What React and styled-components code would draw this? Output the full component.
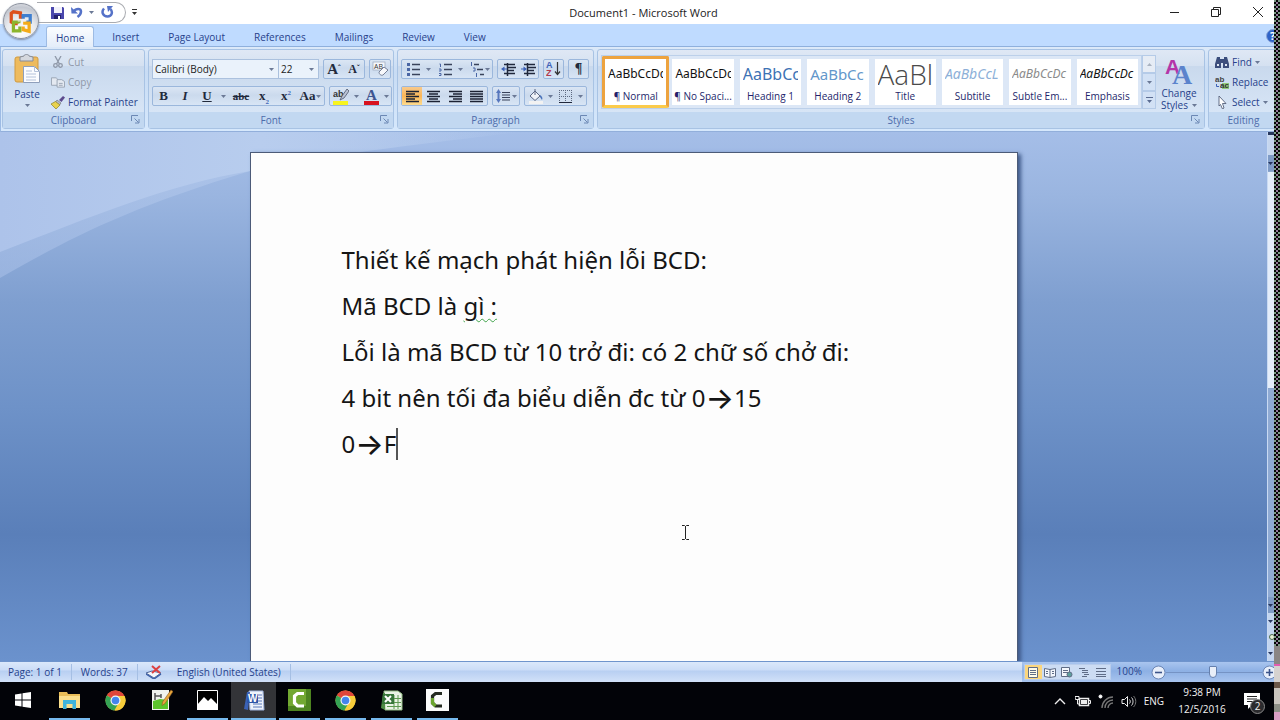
import styled, { createGlobalStyle, css } from "styled-components";

const GlobalStyle = createGlobalStyle`
  * {
    box-sizing: border-box;
  }
  body {
    margin: 0;
    overflow: hidden;
    background: #000;
    font-family: "Open Sans", "Noto Sans", sans-serif;
    font-size: 10px;
    line-height: 14px;
    color: #27418b;
  }
  button, select, input {
    font: inherit;
    color: inherit;
    margin: 0;
    padding: 0;
    border: 0;
    background: none;
  }
  svg {
    display: block;
    flex: none;
  }
`;

const Screen = styled.div`
  display: flex;
  height: 100vh;
`;
const Desktop = styled.div`
  flex: 1;
  min-width: 0;
  display: flex;
  flex-direction: column;
  overflow: hidden;
`;

// edge of the second monitor
const Edge = styled.div`
  width: 6px;
  display: flex;
  flex-direction: column;
`;
const EdgeDots = styled.div`
  flex: 1;
  background-color: #050505;
  background-image: radial-gradient(circle at 1px 1px, #7d9a86 0 1px, transparent 1px),
    radial-gradient(circle at 3px 3px, #94789c 0 1px, transparent 1px);
  background-size: 4px 4px;
`;
const EdgePhoto = styled.div`
  height: 74px;
  background: linear-gradient(
    #8a8684 0 18px,
    #e25bb0 18px 20px,
    #d6d2cf 20px 36px,
    #6b5748 36px 42px,
    #c9c4bd 42px 58px,
    #8d8f86 58px 66px,
    #d99fc4 66px
  );
`;

/* ---------- title bar ---------- */

const TitleBar = styled.header`
  position: relative;
  height: 24px;
  flex: none;
  display: flex;
  align-items: center;
  background: #fff;
  color: #222;
`;
const OfficeButton = styled.button`
  position: absolute;
  z-index: 2;
  left: 3px;
  top: 3px;
  width: 36px;
  height: 36px;
  display: grid;
  place-items: center;
  border: 1px solid #8c929e;
  border-radius: 50%;
  background: radial-gradient(circle at 50% 80%, #fff 0, #e8eaee 45%, #c3c7d0 75%, #f2f3f5 100%);
  box-shadow: 0 1px 2px #7c8aa5;
`;
const QuickAccess = styled.div`
  height: 21px;
  margin-left: 37px;
  padding: 0 6px 0 10px;
  display: flex;
  align-items: center;
  border: 1px solid #a9abb0;
  border-left: 0;
  border-radius: 0 11px 11px 0;
`;
const QuickButton = styled.button`
  width: ${(props) => props.$w || 20}px;
  height: 19px;
  display: grid;
  place-items: center;
`;
const Title = styled.h1`
  flex: 1;
  margin: 0;
  padding: 2px 8px 0 0;
  font-size: 11px;
  font-weight: 400;
  text-align: center;
`;
const WindowButtons = styled.div`
  display: flex;
  margin-right: -5px;
`;
const WindowButton = styled.button`
  width: 42px;
  height: 24px;
  display: grid;
  place-items: center;
`;

/* ---------- tabs ---------- */

const TabBar = styled.nav`
  height: 23px;
  flex: none;
  display: flex;
  align-items: flex-end;
  gap: 7px;
  padding-left: 46px;
  background: #bfdbff;
  border-bottom: 1px solid #8fb0dc;
`;
const Tab = styled.button`
  height: 20px;
  padding: 1px 11px 0;
  border-radius: 3px 3px 0 0;
  ${(props) =>
    props.$active &&
    css`
      margin-bottom: -1px;
      height: 21px;
      padding: 1px 9px 0;
      border: 1px solid #9dbbe4;
      border-bottom: 0;
      background: linear-gradient(#fbfdff, #e4edf9);
    `}
`;
const HelpButton = styled.button`
  width: 16px;
  height: 20px;
  margin: 0 -7px 0 auto;
  display: grid;
  place-items: center;
`;

/* ---------- ribbon ---------- */

const Ribbon = styled.div`
  height: 85px;
  flex: none;
  display: flex;
  gap: 3px;
  padding: 2px 0 2px 1px;
  background: linear-gradient(#dce9f9, #c8dcf4 30%, #d6e8fc);
  border-left: 1px solid #9dbbe4;
  border-bottom: 1px solid #92afdb;
  overflow: hidden;
`;
const Group = styled.section`
  display: flex;
  flex-direction: column;
  flex: none;
  width: ${(props) => (props.$w ? `${props.$w}px` : "auto")};
  ${(props) => props.$grow && "flex: 1; min-width: 0;"}
  border: 1px solid #a8c3e4;
  border-radius: 3px;
  background: linear-gradient(#dfe8f5, #d5e1f1 20%, #c9d9ed 21%, #dce9f9);
  &:last-child {
    margin-right: -5px;
  }
`;
const GroupBody = styled.div`
  flex: 1;
  min-height: 0;
  display: flex;
  padding: ${(props) => props.$pad || "0"};
`;
const GroupLabel = styled.h2`
  position: relative;
  height: 16px;
  flex: none;
  margin: 0;
  font-size: 10px;
  font-weight: 400;
  line-height: 17px;
  text-align: center;
  color: #4d6cab;
  background: #c2d8f1;
`;
const Launcher = styled.button`
  position: absolute;
  right: 4px;
  top: 3px;
`;
const Rows = styled.div`
  display: flex;
  flex-direction: column;
  gap: 7px;
`;
const Row = styled.div`
  display: flex;
  gap: ${(props) => props.$gap || 3}px;
`;
const ToolGroup = styled.div`
  display: flex;
  height: 20px;
  border: 1px solid #9bb7dc;
  border-radius: 2px;
  background: linear-gradient(#dbe6f4, #cbdaed 45%, #d8e5f5);
`;
const Tool = styled.button`
  width: ${(props) => props.$w}px;
  display: flex;
  align-items: center;
  justify-content: center;
  gap: ${(props) => props.$gap || 0}px;
  color: #222a3c;
  background: ${(props) => (props.$active ? "linear-gradient(#f8c98c, #fbb657 50%, #fddb8e)" : "none")};
`;
const Glyph = styled.span`
  font-family: "Liberation Serif", serif;
  font-size: ${(props) => props.$size || 13}px;
  font-weight: 700;
  font-style: ${(props) => (props.$italic ? "italic" : "normal")};
  text-decoration: ${(props) => props.$line || "none"};
  color: ${(props) => props.$color || "#222a3c"};
  sub, sup {
    font-size: 7px;
    line-height: 0;
    color: #3f67b5;
  }
`;
const Combos = styled.div`
  display: flex;
`;
const Combo = styled.label`
  width: ${(props) => props.$w}px;
  height: 20px;
  display: flex;
  align-items: center;
  padding: 0 4px 0 2px;
  border: 1px solid #abc1de;
  background: #eaf2fb;
  color: #222;
  & + & {
    border-left: 0;
  }
`;
const ComboSelect = styled.select`
  flex: 1;
  min-width: 0;
  appearance: none;
  outline: none;
`;

const PasteButton = styled.button`
  width: 48px;
  display: flex;
  flex-direction: column;
  align-items: center;
  gap: 3px;
  padding-top: 4px;
`;
const Stack = styled.div`
  display: flex;
  flex-direction: column;
  padding-top: 2px;
`;
const TextTool = styled.button`
  height: 20px;
  display: flex;
  align-items: center;
  gap: 3px;
  white-space: nowrap;
  color: ${(props) => (props.disabled ? "#8f98a8" : "#27418b")};
  & > svg:first-child {
    width: 14px;
  }
`;

const Gallery = styled.div`
  flex: 1;
  min-width: 0;
  height: 54px;
  display: flex;
  border: 1px solid #bcd0ea;
  background: #dce7f6;
`;
const StyleCard = styled.button`
  flex: 1;
  min-width: 0;
  display: flex;
  flex-direction: column;
  background: #fff;
  background-clip: padding-box;
  border: 3px solid transparent;
  color: #241f6b;
  ${(props) =>
    props.$active &&
    css`
      border: 3px solid #eda33f;
      border-bottom-color: #fbcb4b;
      border-radius: 2px;
    `}
`;
const Sample = styled.span`
  width: 100%;
  height: 30px;
  padding: 0 3px;
  line-height: 30px;
  text-align: left;
  overflow: hidden;
  white-space: nowrap;
  span {
    display: block;
    overflow: hidden;
  }
  font-family: ${(props) => props.$font || '"Noto Sans", sans-serif'};
  font-size: ${(props) => props.$size || 12}px;
  font-weight: ${(props) => props.$weight || 400};
  font-style: ${(props) => (props.$italic ? "italic" : "normal")};
  color: ${(props) => props.$color || "#111"};
`;
const SampleName = styled.span`
  width: 100%;
  height: 14px;
  text-align: center;
  overflow: hidden;
  white-space: nowrap;
`;
const GalleryScroll = styled.div`
  width: 14px;
  height: 54px;
  display: flex;
  flex-direction: column;
`;
const ScrollButton = styled.button`
  flex: 1;
  display: grid;
  place-items: center;
  border: 1px solid #b5cbe8;
  background: ${(props) => (props.disabled ? "#e6ecf5" : "#d2e1f5")};
`;
const ChangeStyles = styled.button`
  width: 46px;
  display: flex;
  flex-direction: column;
  align-items: center;
  line-height: 12px;
`;
const Inline = styled.span`
  display: flex;
  align-items: center;
  gap: 4px;
`;

/* ---------- document ---------- */

const Workspace = styled.main`
  position: relative;
  flex: 1;
  min-height: 0;
  display: flex;
  background: linear-gradient(#a5bee8, #9ab5e0 12%, #7f9fd0 32%, #6e92c8 52%, #5a7fb9 76%, #6b92cd);
`;
const Swoosh = styled.svg`
  position: absolute;
  left: 0;
  top: 0;
`;
const Canvas = styled.div`
  position: relative;
  flex: 1;
  padding-top: 20px;
  overflow: hidden;
`;
const Page = styled.article`
  width: 768px;
  height: 100%;
  margin: 0 auto;
  padding: 84px 0 0 91px;
  border: 1px solid #4c5b78;
  border-bottom: 0;
  background: #fdfdfd;
  box-shadow: 3px 2px 4px #3f5a8a;
`;
const Line = styled.p`
  display: flex;
  align-items: center;
  margin: 0;
  white-space: pre;
  font-family: "Noto Sans", sans-serif;
  font-size: 24px;
  line-height: 46px;
  height: 46px;
  color: #151515;
`;
const Grammar = styled.span`
  text-decoration: underline wavy #3fa34a 1px;
  text-underline-offset: 3px;
`;
const Arrow = styled.span`
  font-family: Inter, sans-serif;
  font-size: 30px;
  font-weight: 500;
`;
const Caret = styled.i`
  width: 2px;
  height: 32px;
  background: #555;
`;
const Pointer = styled.svg`
  position: absolute;
  left: 681px;
  top: 393px;
`;

const ScrollBar = styled.div`
  position: relative;
  width: 7px;
  display: flex;
  flex-direction: column;
  overflow: hidden;
  background: #a9c1e6;
  border-left: 1px solid #c9daf3;
`;
const RulerToggle = styled.button`
  height: 23px;
  border-top: 3px solid #27375e;
  background: #c6d6ee;
`;
const BarButton = styled.button`
  height: 16px;
  display: grid;
  place-items: center start;
  background: ${(props) => props.$bg || "#c3d5ef"};
`;
const Thumb = styled.div`
  height: 218px;
  background: #e4edfa;
  border: 1px solid #8ba5cc;
  border-width: 1px 0;
`;
const Track = styled.div`
  flex: 1;
  background: #8faad3;
`;

/* ---------- status bar ---------- */

const StatusBar = styled.footer`
  height: 21px;
  flex: none;
  display: flex;
  align-items: center;
  border-top: 1px solid #6f94cc;
  background: linear-gradient(#dbe8fb, #cbdcf7 40%, #b8cff2 45%, #d2e1f8);
  white-space: nowrap;
`;
const StatusItem = styled.button`
  height: 16px;
  padding: 0 9px 0 ${(props) => props.$left || 8}px;
  border-right: ${(props) => (props.$plain ? 0 : "1px solid #a5bfe4")};
`;
const Zoom = styled.div`
  margin-left: auto;
  align-self: stretch;
  display: flex;
  align-items: center;
  padding-left: 2px;
  background: linear-gradient(#a9c5ef, #8db0e4 45%, #a8c4ee);
  margin-right: -3px;
`;
const Views = styled.div`
  display: flex;
  height: 16px;
  margin-right: 5px;
  border: 1px solid #b9cdec;
  background: #ccdcf3;
`;
const ViewButton = styled.button`
  width: 17px;
  display: grid;
  place-items: center;
  background: ${(props) => (props.$active ? "#fbd67e" : "none")};
`;
const ZoomRange = styled.input`
  appearance: none;
  width: 96px;
  height: 14px;
  background: linear-gradient(#7593c4, #7593c4) center / 100% 1px no-repeat;
  &::-webkit-slider-thumb {
    appearance: none;
    width: 8px;
    height: 12px;
    border: 1px solid #6580ae;
    border-radius: 1px 1px 4px 4px;
    background: #e8eef8;
  }
`;

/* ---------- taskbar ---------- */

const Taskbar = styled.nav`
  height: 38px;
  flex: none;
  display: flex;
  gap: 1px;
  background: #020308;
  color: #f2f2f2;
`;
const TaskButton = styled.button`
  width: 45px;
  display: grid;
  place-items: center;
  background: ${(props) => (props.$active ? "#333438" : "none")};
  border-bottom: 2px solid transparent;
  border-image: ${(props) => {
    if (props.$active) return "linear-gradient(#76b9ed, #76b9ed) 2";
    if (props.$open) return "linear-gradient(90deg, transparent 4px, #76b9ed 4px 41px, transparent 41px) 2";
    return "none";
  }};
  &:first-child {
    width: 46px;
  }
`;
const Tray = styled.div`
  margin-left: auto;
  display: flex;
  align-items: center;
  gap: 7px;
`;
const TrayButton = styled.button`
  position: relative;
  min-width: 16px;
  display: grid;
  place-items: center;
`;
const Clock = styled.time`
  width: 58px;
  margin: 0 4px 0 2px;
  line-height: 17px;
  text-align: center;
`;
const Notice = styled(TrayButton)`
  width: 20px;
  height: 24px;
  margin-right: 12px;
`;
const Badge = styled.span`
  position: absolute;
  left: 8px;
  top: 10px;
  width: 15px;
  height: 15px;
  border: 1px solid #8a8a8a;
  border-radius: 50%;
  background: #2b2b2e;
  line-height: 13px;
  text-align: center;
`;

/* ---------- icons ---------- */

const Down = ({ color = "#6b7996" }) => (
  <svg width="5" height="3" viewBox="0 0 5 3">
    <path d="M0 0h5L2.500 3z" fill={color} />
  </svg>
);

const OfficeLogo = () => (
  <svg width="26" height="26" viewBox="0 0 24 24" fill="none" strokeWidth="3">
    <path d="M11.500 10V4.500L5 3.500 3 5v8l3 1.500h3" stroke="#dd4f1c" />
    <path d="M14 10V7h6.500v6H17" stroke="#3f7fd0" />
    <path d="M10 14v-1H5v8h6v-4" stroke="#8cb52b" />
    <path d="M14 14h5.500v7.500L14 20v-3" stroke="#f3ab19" />
    <path d="M9 12h2M14 12h2" stroke="#eee" strokeWidth="1" />
  </svg>
);

const SaveIcon = () => (
  <svg width="13" height="13" viewBox="0 0 13 13">
    <path d="M0 1h12l1 1v11H0z" fill="#4a47ad" />
    <path d="M3 1h8v6H3z" fill="#f1f1fa" />
    <path d="M3 9h7v4H3z" fill="#23216b" />
    <path d="M7 10h2v3H7z" fill="#fff" />
  </svg>
);

const UndoIcon = () => (
  <svg width="12" height="12" viewBox="0 0 12 12">
    <path d="M2.500 5.500C5 2 10 2 10 5.500c0 2-1.500 4-3.500 5.500" fill="none" stroke="#5572c8" strokeWidth="2.500" />
    <path d="M0 1l.5 6.500H7z" fill="#5572c8" />
  </svg>
);

const RedoIcon = () => (
  <svg width="13" height="12" viewBox="0 0 13 12">
    <path d="M3 2.500C0 6 2 10.500 6.500 10.500S12 6 9.500 3" fill="none" stroke="#5572c8" strokeWidth="2.500" />
    <path d="M6 0h6L7 6z" fill="#5572c8" />
  </svg>
);

const PasteIcon = () => (
  <svg width="27" height="30" viewBox="0 0 27 30">
    <rect x="1" y="3" width="23" height="25" rx="2" fill="#eebb5e" stroke="#d19a3e" />
    <path d="M6 7V3l4-1c0-2 5-2 5 0l4 1v4z" fill="#d5d8de" stroke="#858b98" />
    <path d="M9.500 12.500h11l5 5v11h-16z" fill="#fbfcff" stroke="#8f9fbb" />
    <path d="M20.500 12.500v5h5M12 17h6M12 20h10M12 23h10M12 26h10" fill="none" stroke="#b4c2da" />
  </svg>
);

const CutIcon = () => (
  <svg width="11" height="12" viewBox="0 0 11 12" fill="none" stroke="#8f98a8" strokeWidth="1.300">
    <path d="M2.500 0l4.500 8M8.500 0L4 8" />
    <circle cx="3" cy="9.500" r="1.800" />
    <circle cx="8" cy="9.500" r="1.800" />
  </svg>
);

const CopyIcon = () => (
  <svg width="15" height="12" viewBox="0 0 15 12" fill="#e4e9f1" stroke="#98a2b3">
    <path d="M.5 1.500h5l2 2v6h-7z" />
    <path d="M6.500 3.500h5l3 2v6h-8zM8.500 7.500h4M8.500 9.500h4" />
  </svg>
);

const BrushIcon = () => (
  <svg width="14" height="13" viewBox="0 0 14 13">
    <path d="M8 4l4-4 2 1.500L10.500 6z" fill="#5d4b8d" />
    <path d="M6 4l4 3-1.500 2L4.500 6z" fill="#b8bcc8" stroke="#555" strokeWidth=".5" />
    <path d="M4.500 5.500L9 9l-4 4L0 8z" fill="#e9d24c" stroke="#8c8129" strokeWidth=".7" />
  </svg>
);

const LauncherIcon = () => (
  <svg width="9" height="9" viewBox="0 0 9 9" fill="none" stroke="#6c88b4">
    <path d="M.5 6V.5H7M3.500 3.500l4 4M8 4v4H4" />
  </svg>
);

const EraserIcon = () => (
  <svg width="17" height="16" viewBox="0 0 17 16">
    <rect x="1" y="1" width="12" height="8" fill="#f5f7fb" stroke="#9aa6bb" strokeWidth=".7" />
    <text x="2" y="8" fontSize="7" fontFamily="Open Sans" fill="#333">AB</text>
    <path d="M7 11l5-5 4 3-5 5c-2 1-4-1-4-3z" fill="#f7f8fb" stroke="#69748c" strokeWidth=".9" />
  </svg>
);

const LISTS = {
  bullets: "M6 2.500h8M6 7.500h8M6 12.500h8",
  numbers: "M6 2.500h8M6 7.500h8M6 12.500h8",
  levels: "M5 2.500h5M8 7.500h6M11 12.500h4",
};
const ListIcon = ({ kind }) => (
  <svg width="15" height="15" viewBox="0 0 15 15">
    <path d={LISTS[kind]} stroke="#39435b" strokeWidth="1.300" />
    {kind === "bullets" && <path d="M1 1h3v3H1zM1 6h3v3H1zM1 11h3v3H1z" fill="#4a66a5" />}
    {kind === "numbers" && <path d="M1.500 2h1v3M1 7h2v2H1M1 11.500h2v2H1" fill="none" stroke="#4a66a5" />}
    {kind === "levels" && <path d="M2.500 0v4M4 6h2v3H4M7.500 11v4" fill="none" stroke="#4a66a5" />}
  </svg>
);

const IndentIcon = ({ flip }) => (
  <svg width="15" height="13" viewBox="0 0 15 13">
    <path d="M3 1.500h11M7 4.500h8M7 7.500h6M3 10.500h11M6.500 0v13" stroke="#20283c" strokeWidth="1.500" />
    <path d={flip ? "M6 6L2.500 3.500v2H0v1h2.500v2z" : "M0 6l3.500-2.500v2H6v1H3.500v2z"} fill="#3d62b8" />
  </svg>
);

const ALIGNS = {
  left: "M0 1.500h13M0 4h9M0 6.500h13M0 9h9M0 11.500h13",
  center: "M0 1.500h13M2 4h9M0 6.500h13M2 9h9M0 11.500h13",
  right: "M0 1.500h13M4 4h9M0 6.500h13M4 9h9M0 11.500h13",
  justify: "M0 1.500h13M0 4h13M0 6.500h13M0 9h13M0 11.500h13",
};
const AlignIcon = ({ kind }) => (
  <svg width="13" height="13" viewBox="0 0 13 13">
    <path d={ALIGNS[kind]} stroke="#1c2233" strokeWidth="1.500" />
  </svg>
);

const SpacingIcon = () => (
  <svg width="14" height="14" viewBox="0 0 14 14">
    <path d="M2.500 0L5 4H3.500v6H5l-2.500 4L0 10h1.500V4H0z" fill="#5777bd" />
    <path d="M6 3.500h8M6 6h8M6 8.500h8M6 11h8" stroke="#39435b" strokeWidth="1.200" />
  </svg>
);

const SortIcon = () => (
  <svg width="15" height="16" viewBox="0 0 15 16">
    <text x="0" y="7" fontSize="9" fontWeight="700" fontFamily="Liberation Sans" fill="#3d62b8">A</text>
    <text x="0" y="15" fontSize="9" fontWeight="700" fontFamily="Liberation Sans" fill="#b23a4e">Z</text>
    <path d="M11.500 1v12M9 10.500l2.500 3 2.500-3" fill="none" stroke="#333" strokeWidth="1.200" />
  </svg>
);

const BucketIcon = () => (
  <svg width="16" height="15" viewBox="0 0 16 15">
    <path d="M2 7l5-5 5 5-5 4.500z" fill="#eef1f7" stroke="#5a6784" />
    <path d="M7 0v6" stroke="#5a6784" />
    <path d="M12 6c2 1 3 3 2 5l-2-3z" fill="#4971b9" />
    <path d="M1 12h14v3H1z" fill="#f2f2f2" />
  </svg>
);

const BordersIcon = () => (
  <svg width="13" height="13" viewBox="0 0 13 13" fill="none" stroke="#5d6980">
    <path d="M.5 0v12M6.500 0v12M12.500 0v12M0 .5h13M0 6.500h13" strokeDasharray="1 1" />
    <path d="M0 12.500h13" stroke="#20283c" />
  </svg>
);

const HighlightIcon = () => (
  <svg width="16" height="17" viewBox="0 0 16 17">
    <text x="0" y="9" fontSize="9" fontWeight="700" fontFamily="Liberation Sans" fill="#333">ab</text>
    <path d="M14 1L9 8l-2 4 4-2 5-7z" fill="#b9c2d4" stroke="#4c566c" strokeWidth=".8" />
    <path d="M0 13h15v4H0z" fill="#f8f41e" />
  </svg>
);

const FontColorIcon = () => (
  <svg width="15" height="17" viewBox="0 0 15 17">
    <text x="2" y="12" fontSize="15" fontWeight="700" fontFamily="Liberation Serif" fill="#3e5590">A</text>
    <path d="M0 13h15v4H0z" fill="#d8121f" />
  </svg>
);

const ChangeStylesIcon = () => (
  <svg width="30" height="32" viewBox="0 0 30 32">
    <text x="1" y="19" fontSize="21" fontWeight="700" fontFamily="Liberation Sans" fill="#b535a8">A</text>
    <text x="8" y="29" fontSize="28" fontWeight="700" fontFamily="Liberation Serif" fill="#5b83cc">A</text>
  </svg>
);

const FindIcon = () => (
  <svg width="14" height="12" viewBox="0 0 14 12" fill="#3b4d7c">
    <path d="M2 1h3v2h4V1h3l2 7v4H8V7H6v5H0V8z" />
    <path d="M2 8h2v2H2zM10 8h2v2h-2z" fill="#dfe7f4" />
  </svg>
);

const ReplaceIcon = () => (
  <svg width="14" height="13" viewBox="0 0 14 13" fontFamily="Liberation Sans" fontSize="8" fontWeight="700">
    <text x="0" y="6" fill="#444">ab</text>
    <path d="M7 7h7v6H7z" fill="#8fc97a" />
    <text x="5" y="12" fill="#333">ac</text>
    <path d="M1.500 8v2.500H4" fill="none" stroke="#3d62b8" />
  </svg>
);

const SelectIcon = () => (
  <svg width="14" height="13" viewBox="0 0 14 13">
    <path d="M4 0l7 7.500H7.500L9 12l-1.500 1-2-4.500L4 10z" fill="#fff" stroke="#55617c" strokeWidth=".9" />
  </svg>
);

const ProofIcon = () => (
  <svg width="16" height="14" viewBox="0 0 16 14">
    <path d="M0 8l6-2 9 2-7 5z" fill="#f5f7fb" stroke="#51699c" />
    <path d="M0 9l8 5 7-5" fill="none" stroke="#3b5ea6" strokeWidth="1.400" />
    <path d="M6 1l8 7M14 1L6 8" stroke="#dd4040" strokeWidth="2" />
  </svg>
);

const ViewIcon = ({ kind }) => (
  <svg width="12" height="11" viewBox="0 0 12 11" fill="none" stroke="#5f6c86">
    {kind === "print" && <path d="M1.500.5h9v10h-9zM3 3.500h6M3 5.500h6M3 7.500h6" fill="#fffbe8" />}
    {kind === "read" && <path d="M.5 1.500L6 2.500l5.500-1v8L6 10.500.5 9.500zM6 2v8M2 4.500h2M8 4.500h2M2 6.500h2M8 6.500h2" fill="#f4f7fc" />}
    {kind === "web" && (
      <>
        <path d="M.5.5h8v9h-8zM2 3.500h5M2 5.500h5" fill="#f4f7fc" />
        <circle cx="8.500" cy="7.500" r="2.500" fill="#5d9f9c" />
      </>
    )}
    {kind === "outline" && <path d="M1 1.500h6M4 3.500h6M4 5.500h6M6 7.500h5M4 9.500h5" />}
    {kind === "draft" && <path d="M1 1.500h10M1 4.500h10M1 7.500h10M1 9.500h10" />}
  </svg>
);

const RoundIcon = ({ plus }) => (
  <svg width="15" height="15" viewBox="0 0 15 15">
    <circle cx="7.500" cy="7.500" r="6.500" fill="#e7eefa" stroke="#6c86b5" />
    <path d={plus ? "M4 7.500h7M7.500 4v7" : "M4 7.500h7"} stroke="#3c548a" strokeWidth="1.600" />
  </svg>
);

const WindowsIcon = () => (
  <svg width="16" height="16" viewBox="0 0 16 16" fill="#fff">
    <path d="M0 2.500l6.500-1v6H0zM7.500 1.300L16 0v7.500H7.500zM0 8.500h6.500v6l-6.500-1zM7.500 8.500H16V16l-8.500-1.300z" />
  </svg>
);

const FolderIcon = () => (
  <svg width="21" height="18" viewBox="0 0 21 18">
    <path d="M0 1h8l1 2h12v14H0z" fill="#e9bd58" />
    <path d="M0 5h21v12H0z" fill="#fbdf8c" />
    <path d="M4 9h13v9h-3.500v-5h-6v5H4z" fill="#3fb4dc" />
  </svg>
);

const ChromeIcon = () => (
  <svg width="21" height="21" viewBox="0 0 21 21">
    <circle cx="10.500" cy="10.500" r="10" fill="#f8cd3a" />
    <path d="M10.500 10.500L1.800 5.500A10 10 0 0 1 19.500 6z" fill="#e0453a" />
    <path d="M10.500 10.500L1.800 5.500a10 10 0 0 0 7.500 15l4-7z" fill="#35a354" />
    <path d="M10.500 6h9a10 10 0 0 1-9.500 14.500l4.500-8z" fill="#f8cd3a" />
    <circle cx="10.500" cy="10.500" r="5" fill="#f5f5f5" />
    <circle cx="10.500" cy="10.500" r="3.800" fill="#4485ee" />
  </svg>
);

const NotepadIcon = () => (
  <svg width="22" height="22" viewBox="0 0 22 22">
    <path d="M1 1h17v20H1z" fill="#f1f3ee" />
    <path d="M2 12l7-2 8 1v9H2z" fill="#5cc52c" />
    <path d="M4 4v7M4 7h6M10 5v4" stroke="#555" strokeWidth="1.500" />
    <path d="M20 1l2 1.500-8 12-3 2 .5-3.500z" fill="#e8a63c" stroke="#8c5c22" strokeWidth=".6" />
  </svg>
);

const PhotosIcon = () => (
  <svg width="21" height="20" viewBox="0 0 21 20">
    <path d="M.500.500h20v19H.5z" fill="#000" stroke="#fff" />
    <path d="M0 15l7-8 4 4 3-3 7 7v5H0z" fill="#fff" />
  </svg>
);

const WordIcon = () => (
  <svg width="22" height="21" viewBox="0 0 22 21">
    <path d="M6 1h14l1 19H7z" fill="#eef2fb" stroke="#9fb3de" />
    <path d="M12 5h7M14 8h5M14 11h5M10 14h9M10 17h9" stroke="#5876b8" />
    <path d="M4 2L1 19l4 1 2-18z" fill="#3b62b5" />
    <path d="M5 4h10v9H4z" fill="#2d55a8" />
    <text x="5" y="12" fontSize="10" fontWeight="700" fontFamily="Liberation Sans" fill="#fff">W</text>
  </svg>
);

const CamtasiaIcon = ({ light }) => (
  <svg width="23" height="22" viewBox="0 0 23 22">
    <path d="M0 0h23v22H0z" fill={light ? "#fbfbfb" : "#72a832"} />
    {!light && <path d="M0 17h18V0h5v22H0z" fill="#4d8420" />}
    <path d="M16 4.500H9.500L6.500 7v7l3 3H16" fill="none" stroke={light ? "#252b21" : "#fff"} strokeWidth="3.200" />
    {light && <path d="M6.500 9v5l3 3" fill="none" stroke="#6ca52f" strokeWidth="3.200" />}
  </svg>
);

const ExcelIcon = () => (
  <svg width="23" height="21" viewBox="0 0 23 21">
    <path d="M4 1h14l4 3v16H5z" fill="#e9f3e5" stroke="#93bd85" />
    <path d="M7 16.500h14M14 5v14M18 5v14M12 8.500h9M12 12.500h9" stroke="#5d9a50" />
    <path d="M3 3L1 18l4 2V3z" fill="#4d8b45" />
    <path d="M3 4h11v10H2z" fill="#37763a" />
    <path d="M5 6l6 6M11 6l-6 6" stroke="#fff" strokeWidth="2" />
  </svg>
);

/* ---------- data ---------- */

const TABS = ["Home", "Insert", "Page Layout", "References", "Mailings", "Review", "View"];

const STYLES = [
  { name: "¶ Normal", text: "AaBbCcDc" },
  { name: "¶ No Spaci...", text: "AaBbCcDc" },
  { name: "Heading 1", text: "AaBbCc", size: 16, color: "#3d72b4" },
  { name: "Heading 2", text: "AaBbCc", size: 15, color: "#6397cb" },
  { name: "Title", text: "AaBl", size: 28, color: "#4a4a4a", weight: 300, font: '"Open Sans", sans-serif' },
  { name: "Subtitle", text: "AaBbCcL", size: 14, color: "#8db0d8", italic: true },
  { name: "Subtle Em...", text: "AaBbCcDc", color: "#8a8a8a", italic: true },
  { name: "Emphasis", text: "AaBbCcDc", italic: true },
];

const TASKS = [
  { name: "Start", icon: <WindowsIcon /> },
  { name: "File Explorer", icon: <FolderIcon />, open: true },
  { name: "Google Chrome", icon: <ChromeIcon /> },
  { name: "Notepad++", icon: <NotepadIcon /> },
  { name: "Photos", icon: <PhotosIcon />, open: true },
  { name: "Word", icon: <WordIcon />, open: true, active: true },
  { name: "Camtasia Studio", icon: <CamtasiaIcon />, open: true },
  { name: "Google Chrome window", icon: <ChromeIcon />, open: true },
  { name: "Excel", icon: <ExcelIcon />, open: true },
  { name: "Camtasia Recorder", icon: <CamtasiaIcon light />, open: true },
];

function Label({ children, plain }) {
  return (
    <GroupLabel>
      {children}
      {!plain && (
        <Launcher aria-label={`${children} options`}>
          <LauncherIcon />
        </Launcher>
      )}
    </GroupLabel>
  );
}

function ClipboardGroup() {
  return (
    <Group $w={143}>
      <GroupBody>
        <PasteButton>
          <PasteIcon />
          Paste
          <Down />
        </PasteButton>
        <Stack>
          <TextTool disabled>
            <CutIcon />
            Cut
          </TextTool>
          <TextTool disabled>
            <CopyIcon />
            Copy
          </TextTool>
          <TextTool>
            <BrushIcon />
            Format Painter
          </TextTool>
        </Stack>
      </GroupBody>
      <Label>Clipboard</Label>
    </Group>
  );
}

function FontGroup() {
  return (
    <Group $w={246}>
      <GroupBody $pad="9px 0 0 3px">
        <Rows>
          <Row $gap={4}>
            <Combos>
              <Combo $w={127}>
                <ComboSelect aria-label="Font">
                  <option>Calibri (Body)</option>
                </ComboSelect>
                <Down />
              </Combo>
              <Combo $w={40}>
                <ComboSelect aria-label="Font size">
                  <option>22</option>
                </ComboSelect>
                <Down />
              </Combo>
            </Combos>
            <ToolGroup>
              <Tool $w={20} aria-label="Grow font">
                <Glyph $size={15}>A</Glyph>
                <Glyph $size={8}>ˆ</Glyph>
              </Tool>
              <Tool $w={20} aria-label="Shrink font">
                <Glyph $size={12}>A</Glyph>
                <Glyph $size={8}>ˇ</Glyph>
              </Tool>
            </ToolGroup>
            <ToolGroup>
              <Tool $w={20} aria-label="Clear formatting">
                <EraserIcon />
              </Tool>
            </ToolGroup>
          </Row>
          <Row $gap={4}>
            <ToolGroup>
              <Tool $w={21}><Glyph>B</Glyph></Tool>
              <Tool $w={22}><Glyph $italic>I</Glyph></Tool>
              <Tool $w={22}><Glyph $line="underline">U</Glyph></Tool>
              <Tool $w={11} aria-label="Underline style"><Down /></Tool>
              <Tool $w={24}><Glyph $size={11} $line="line-through">abc</Glyph></Tool>
              <Tool $w={22}><Glyph>x<sub>2</sub></Glyph></Tool>
              <Tool $w={22}><Glyph>x<sup>2</sup></Glyph></Tool>
              <Tool $w={27} $gap={1}><Glyph>Aa</Glyph><Down /></Tool>
            </ToolGroup>
            <ToolGroup>
              <Tool $w={21} aria-label="Highlight"><HighlightIcon /></Tool>
              <Tool $w={10} aria-label="Highlight colours"><Down /></Tool>
              <Tool $w={20} aria-label="Font color"><FontColorIcon /></Tool>
              <Tool $w={10} aria-label="Font colours"><Down /></Tool>
            </ToolGroup>
          </Row>
        </Rows>
      </GroupBody>
      <Label>Font</Label>
    </Group>
  );
}

function ParagraphGroup() {
  return (
    <Group $w={197}>
      <GroupBody $pad="9px 0 0 3px">
        <Rows>
          <Row $gap={4}>
            <ToolGroup>
              <Tool $w={32} $gap={5} aria-label="Bullets"><ListIcon kind="bullets" /><Down /></Tool>
              <Tool $w={33} $gap={5} aria-label="Numbering"><ListIcon kind="numbers" /><Down /></Tool>
              <Tool $w={25} $gap={1} aria-label="Multilevel list"><ListIcon kind="levels" /><Down /></Tool>
            </ToolGroup>
            <ToolGroup>
              <Tool $w={20} aria-label="Decrease indent"><IndentIcon /></Tool>
              <Tool $w={20} aria-label="Increase indent"><IndentIcon flip /></Tool>
            </ToolGroup>
            <ToolGroup>
              <Tool $w={19} aria-label="Sort"><SortIcon /></Tool>
            </ToolGroup>
            <ToolGroup>
              <Tool $w={19}><Glyph $size={14}>¶</Glyph></Tool>
            </ToolGroup>
          </Row>
          <Row $gap={4}>
            <ToolGroup>
              <Tool $w={20} $active aria-label="Align left"><AlignIcon kind="left" /></Tool>
              <Tool $w={23} aria-label="Center"><AlignIcon kind="center" /></Tool>
              <Tool $w={21} aria-label="Align right"><AlignIcon kind="right" /></Tool>
              <Tool $w={21} aria-label="Justify"><AlignIcon kind="justify" /></Tool>
            </ToolGroup>
            <ToolGroup>
              <Tool $w={26} $gap={2} aria-label="Line spacing"><SpacingIcon /><Down /></Tool>
            </ToolGroup>
            <ToolGroup>
              <Tool $w={30} $gap={4} aria-label="Shading"><BucketIcon /><Down /></Tool>
              <Tool $w={31} $gap={6} aria-label="Borders"><BordersIcon /><Down /></Tool>
            </ToolGroup>
          </Row>
        </Rows>
      </GroupBody>
      <Label>Paragraph</Label>
    </Group>
  );
}

function StylesGroup() {
  return (
    <Group $grow>
      <GroupBody $pad="5px 2px 0 3px">
        <Gallery>
          {STYLES.map((style, i) => (
            <StyleCard key={style.name} $active={i === 0}>
              <Sample
                $size={style.size}
                $color={style.color}
                $italic={style.italic}
                $weight={style.weight}
                $font={style.font}
              >
                <span>{style.text}</span>
              </Sample>
              <SampleName>{style.name}</SampleName>
            </StyleCard>
          ))}
        </Gallery>
        <GalleryScroll>
          <ScrollButton disabled aria-label="Previous styles">
            <svg width="5" height="3"><path d="M0 3h5L2.500 0z" fill="#a9b2c0" /></svg>
          </ScrollButton>
          <ScrollButton aria-label="Next styles"><Down /></ScrollButton>
          <ScrollButton aria-label="More styles">
            <svg width="7" height="6"><path d="M0 0h7v1H0zM1 3h5L3.500 6z" fill="#5b6c92" /></svg>
          </ScrollButton>
        </GalleryScroll>
        <ChangeStyles>
          <ChangeStylesIcon />
          Change
          <Inline>
            Styles <Down />
          </Inline>
        </ChangeStyles>
      </GroupBody>
      <Label>Styles</Label>
    </Group>
  );
}

function EditingGroup() {
  return (
    <Group $w={71}>
      <GroupBody $pad="0 0 0 6px">
        <Stack>
          <TextTool><FindIcon />Find <Down /></TextTool>
          <TextTool><ReplaceIcon />Replace</TextTool>
          <TextTool><SelectIcon />Select <Down /></TextTool>
        </Stack>
      </GroupBody>
      <Label plain>Editing</Label>
    </Group>
  );
}

function Document() {
  return (
    <Workspace>
      <Swoosh width="520" height="170" viewBox="0 0 520 170">
        <defs>
          <linearGradient id="sky">
            <stop offset="0" stopColor="#adc3ea" />
            <stop offset=".5" stopColor="#b8cdee" />
            <stop offset="1" stopColor="#b8cdee" stopOpacity="0" />
          </linearGradient>
        </defs>
        <path d="M0 0h520C440 10 340 20 250 39C120 78 60 112 0 146z" fill="url(#sky)" opacity=".5" />
        <path d="M0 0h520C440 10 340 20 250 39C170 52 90 85 0 120z" fill="url(#sky)" />
      </Swoosh>
      <Canvas>
        <Page>
          <Line>Thiết kế mạch phát hiện lỗi BCD:</Line>
          <Line>
            {"Mã BCD là "}
            <Grammar>gì :</Grammar>
          </Line>
          <Line>Lỗi là mã BCD từ 10 trở đi: có 2 chữ số chở đi:</Line>
          <Line>
            4 bit nên tối đa biểu diễn đc từ 0<Arrow>→</Arrow>15
          </Line>
          <Line>
            0<Arrow>→</Arrow>F<Caret />
          </Line>
        </Page>
        <Pointer width="9" height="15" viewBox="0 0 9 15" fill="none" stroke="#222">
          <path d="M1 .5h2.500l1 1 1-1H8M4.500 1v13M1 14.500h2.500l1-1 1 1H8" />
        </Pointer>
      </Canvas>
      <ScrollBar>
        <RulerToggle aria-label="View ruler" />
        <BarButton $bg="#7f9bc6" aria-label="Scroll up"><Down color="#27375e" /></BarButton>
        <Thumb />
        <Track />
        <BarButton $bg="#7f9bc6" aria-label="Scroll down"><Down color="#27375e" /></BarButton>
        <BarButton aria-label="Previous page"><Down color="#27375e" /></BarButton>
        <BarButton aria-label="Select browse object">
          <svg width="6" height="6"><circle cx="4" cy="3" r="2.500" fill="#e8f0d8" stroke="#4c6b4c" /></svg>
        </BarButton>
        <BarButton aria-label="Next page"><Down color="#27375e" /></BarButton>
      </ScrollBar>
    </Workspace>
  );
}

function Status() {
  return (
    <StatusBar>
      <StatusItem>Page: 1 of 1</StatusItem>
      <StatusItem $left={9}>Words: 37</StatusItem>
      <StatusItem $plain aria-label="Proofing errors"><ProofIcon /></StatusItem>
      <StatusItem $left={6}>English (United States)</StatusItem>
      <Zoom>
        <Views>
          {["print", "read", "web", "outline", "draft"].map((kind) => (
            <ViewButton key={kind} $active={kind === "print"} aria-label={`${kind} view`}>
              <ViewIcon kind={kind} />
            </ViewButton>
          ))}
        </Views>
        <StatusItem as="span" $left={1} $plain>100%</StatusItem>
        <button aria-label="Zoom out"><RoundIcon /></button>
        <ZoomRange type="range" min="0" max="100" defaultValue="49" aria-label="Zoom" />
        <button aria-label="Zoom in"><RoundIcon plus /></button>
      </Zoom>
    </StatusBar>
  );
}

function TaskRow() {
  return (
    <Taskbar>
      {TASKS.map((task) => (
        <TaskButton key={task.name} $open={task.open} $active={task.active} aria-label={task.name}>
          {task.icon}
        </TaskButton>
      ))}
      <Tray>
        <TrayButton aria-label="Hidden icons">
          <svg width="12" height="7" fill="none" stroke="#eee" strokeWidth="1.400"><path d="M1 6l5-5 5 5" /></svg>
        </TrayButton>
        <TrayButton aria-label="Battery">
          <svg width="16" height="11" fill="none" stroke="#eee">
            <path d="M4.500 2.500h9v7h-9z" strokeWidth="1.500" />
            <path d="M14 4.500h1.500v3H14M2.500 3v5h2M0 .5h4v3H.5z" />
            <path d="M6 4h6v4H6z" fill="#eee" stroke="none" />
          </svg>
        </TrayButton>
        <TrayButton aria-label="Network">
          <svg width="16" height="16" fill="none" stroke="#777">
            <path d="M4 15A11 11 0 0 1 15 4M7 15a8 8 0 0 1 8-8M10 15a5 5 0 0 1 5-5" strokeWidth="1.400" />
            <circle cx="2.500" cy="3.500" r="1.500" fill="#fff" stroke="#fff" />
          </svg>
        </TrayButton>
        <TrayButton aria-label="Volume">
          <svg width="16" height="13" fill="none" stroke="#eee">
            <path d="M1 4.500h2.500l3-3v10l-3-3H1zM8.500 4.500c1 1 1 3 0 4M10.500 2.500c2 2 2 6 0 8" />
            <path d="M12.500 1c3 3 3 8 0 11" stroke="#777" />
          </svg>
        </TrayButton>
        <TrayButton>ENG</TrayButton>
        <Clock>
          9:38 PM
          <br />
          12/5/2016
        </Clock>
        <Notice aria-label="2 notifications">
          <svg width="16" height="17"><path d="M0 0h16v12H8l-4 4v-4H0z" fill="#fff" /><path d="M3 3.500h10M3 6h10M3 8.500h6" stroke="#222" /></svg>
          <Badge>2</Badge>
        </Notice>
      </Tray>
    </Taskbar>
  );
}

export default function App() {
  return (
    <Screen>
      <GlobalStyle />
      <Desktop>
        <TitleBar>
          <OfficeButton aria-label="Office">
            <OfficeLogo />
          </OfficeButton>
          <QuickAccess>
            <QuickButton aria-label="Save"><SaveIcon /></QuickButton>
            <QuickButton aria-label="Undo"><UndoIcon /></QuickButton>
            <QuickButton $w={8} aria-label="Undo list"><Down /></QuickButton>
            <QuickButton $w={24} aria-label="Redo"><RedoIcon /></QuickButton>
          </QuickAccess>
          <QuickButton $w={16} aria-label="Customize toolbar">
            <svg width="5" height="6"><path d="M0 0h5v1H0zM0 3h5L2.500 6z" fill="#333" /></svg>
          </QuickButton>
          <Title>Document1 - Microsoft Word</Title>
          <WindowButtons>
            <WindowButton aria-label="Minimize">
              <svg width="9" height="1"><path d="M0 0h9v1H0z" fill="#222" /></svg>
            </WindowButton>
            <WindowButton aria-label="Restore">
              <svg width="10" height="10" fill="none" stroke="#222"><path d="M.5 2.500h7v7h-7zM2.500 2.500v-2h7v7h-2" /></svg>
            </WindowButton>
            <WindowButton aria-label="Close">
              <svg width="10" height="10" stroke="#222"><path d="M0 0l10 10M10 0L0 10" /></svg>
            </WindowButton>
          </WindowButtons>
        </TitleBar>
        <TabBar>
          {TABS.map((tab) => (
            <Tab key={tab} $active={tab === "Home"}>
              {tab}
            </Tab>
          ))}
          <HelpButton aria-label="Help">
            <svg width="14" height="14">
              <circle cx="7" cy="7" r="6.500" fill="#2f63c8" stroke="#8aa4d6" />
              <text x="4" y="11" fontSize="11" fontWeight="700" fontFamily="Open Sans" fill="#fff">?</text>
            </svg>
          </HelpButton>
        </TabBar>
        <Ribbon>
          <ClipboardGroup />
          <FontGroup />
          <ParagraphGroup />
          <StylesGroup />
          <EditingGroup />
        </Ribbon>
        <Document />
        <Status />
        <TaskRow />
      </Desktop>
      <Edge>
        <EdgeDots />
        <EdgePhoto />
      </Edge>
    </Screen>
  );
}
